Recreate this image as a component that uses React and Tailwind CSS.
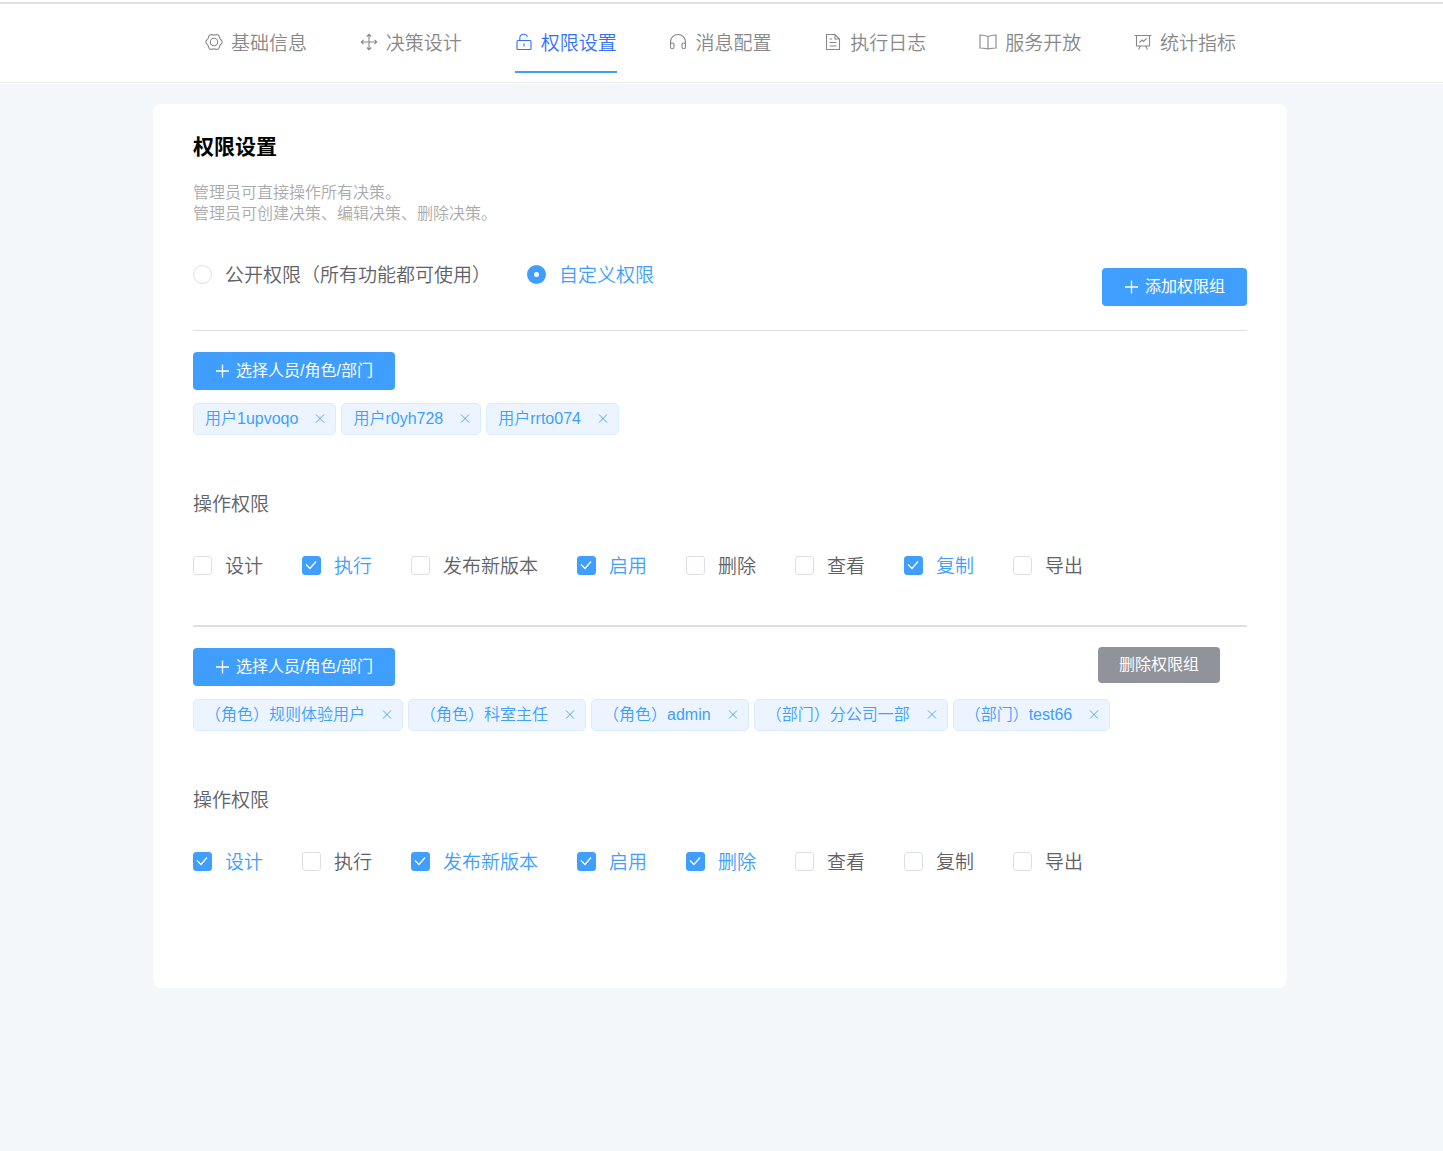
import { useState } from "react";
import clsx from "clsx";

// six-toothed outline with soft corners
const gearPath =
  Array.from({ length: 72 }, (_, i) => {
    const a = (i / 72) * Math.PI * 2;
    const r = 7.5 + 0.6 * Math.cos(6 * a);
    return `${i ? "L" : "M"}${(9 + r * Math.cos(a)).toFixed(2)} ${(9 + r * Math.sin(a)).toFixed(2)}`;
  }).join("") + "Z";

const icons = {
  setting: (
    <>
      <path d={gearPath} />
      <circle cx="9" cy="9" r="3.7" />
    </>
  ),
  rank: (
    <path d="M9 1.500v15M1.500 9h15M6.800 3.500 9 1.300l2.200 2.200M6.800 14.500 9 16.700l2.200-2.200M3.500 6.800 1.300 9l2.200 2.200M14.500 6.800 16.700 9l-2.200 2.200" />
  ),
  unlock: (
    <>
      <rect x="2" y="7.5" width="14" height="9" rx="1" />
      <path d="M4.800 7.500V5.200a4 4 0 0 1 7.700-1.500M9 10.500v3" />
    </>
  ),
  headset: (
    <path d="M1.500 11.500V9a7.500 7.500 0 0 1 15 0v2.500M1.500 12.500v-1.500a2 2 0 0 1 3.500 0v3a1.750 1.750 0 0 1-3.500 0zM16.500 12.500v-1.500a2 2 0 0 0-3.500 0v3a1.750 1.750 0 0 0 3.500 0z" />
  ),
  document: (
    <path d="M2.500 1.500h8.500l4.500 4.500v10.500h-13zM11 1.500v4.500h4.500M5.500 6h2.500M5.500 9.500h7M5.500 13h7" />
  ),
  reading: (
    <path d="M9 3.500v12.500M9 3.500Q5 2 1 2v13q4 0 8 1 4-1 8-1v-13q-4 0-8 1.500" />
  ),
  board: (
    <path d="M.5 2.500h17M2.500 2.500v10.500h13v-10.500M6.500 13l-2 3.500M11.500 13l2 3.500M5.500 9.500l2.500-2.500 1.500 1.500 3-3" />
  ),
};

const tabs = [
  { key: "base", label: "基础信息", icon: "setting" },
  { key: "design", label: "决策设计", icon: "rank" },
  { key: "permission", label: "权限设置", icon: "unlock" },
  { key: "message", label: "消息配置", icon: "headset" },
  { key: "log", label: "执行日志", icon: "document" },
  { key: "service", label: "服务开放", icon: "reading" },
  { key: "stats", label: "统计指标", icon: "board" },
];

const actions = ["设计", "执行", "发布新版本", "启用", "删除", "查看", "复制", "导出"];

const initialGroups = [
  {
    id: 1,
    members: ["用户1upvoqo", "用户r0yh728", "用户rrto074"],
    allowed: ["执行", "启用", "复制"],
  },
  {
    id: 2,
    members: [
      "（角色）规则体验用户",
      "（角色）科室主任",
      "（角色）admin",
      "（部门）分公司一部",
      "（部门）test66",
    ],
    allowed: ["设计", "发布新版本", "启用", "删除"],
  },
];

function TabIcon({ name }) {
  return (
    <svg
      className="size-[18px] shrink-0"
      viewBox="0 0 18 18"
      fill="none"
      stroke="currentColor"
      strokeWidth="1.1"
      aria-hidden="true"
    >
      {icons[name]}
    </svg>
  );
}

function AddButton({ children, className, onClick }) {
  return (
    <button
      type="button"
      onClick={onClick}
      className={clsx(
        "flex h-[38px] items-center gap-1.5 rounded bg-[#409eff] pr-[22px] pl-[21px] text-base font-normal text-white",
        className,
      )}
    >
      <svg className="size-4" viewBox="0 0 16 16" stroke="currentColor" strokeWidth="1.3" aria-hidden="true">
        <path d="M8.500 1.500v13M2 8h13" />
      </svg>
      {children}
    </button>
  );
}

function Tag({ label, onClose }) {
  return (
    <span className="flex h-8 items-center rounded-[5px] border border-[#d9ecff] bg-[#ecf5ff] pr-1.5 pl-[11px] text-base whitespace-nowrap text-[#409eff]">
      {label}
      <button
        type="button"
        aria-label={`移除${label}`}
        onClick={onClose}
        className="ml-[13px] flex size-[18px] items-center justify-center"
      >
        <svg className="size-2.5" viewBox="0 0 10 10" stroke="currentColor" strokeWidth="0.9" aria-hidden="true">
          <path d="M1 .5l8 8M9 .5l-8 8" />
        </svg>
      </button>
    </span>
  );
}

function ActionCheckbox({ label, checked, onChange }) {
  return (
    <label
      className={clsx(
        "flex h-[19px] cursor-pointer items-center gap-[13px]",
        checked ? "text-[#409eff]" : "text-[#606266]",
      )}
    >
      <span className="relative flex">
        <input
          type="checkbox"
          checked={checked}
          onChange={onChange}
          className="size-[19px] appearance-none rounded-[3px] border border-[#dcdfe6] bg-white checked:border-[#409eff] checked:bg-[#409eff]"
        />
        {checked && (
          <svg
            className="pointer-events-none absolute inset-0 size-[19px] text-white"
            viewBox="0 0 19 19"
            fill="none"
            stroke="currentColor"
            strokeWidth="1.2"
            aria-hidden="true"
          >
            <path d="M4 8.500l4 4 6-7" />
          </svg>
        )}
      </span>
      <span className="pt-0.5">{label}</span>
    </label>
  );
}

function ScopeRadio({ label, checked, onChange }) {
  return (
    <label
      className={clsx(
        "flex h-[19px] cursor-pointer items-center gap-[13px]",
        checked ? "text-[#409eff]" : "text-[#606266]",
      )}
    >
      <input
        type="radio"
        name="scope"
        checked={checked}
        onChange={onChange}
        className="size-[19px] appearance-none rounded-full border border-[#dcdfe6] bg-white checked:border-[7px] checked:border-[#409eff]"
      />
      <span className="pt-0.5">{label}</span>
    </label>
  );
}

function PermissionGroup({ group, first, onChange, onDelete }) {
  const toggle = (action) =>
    onChange({
      ...group,
      allowed: group.allowed.includes(action)
        ? group.allowed.filter((a) => a !== action)
        : [...group.allowed, action],
    });

  return (
    <section className={clsx("border-[#dcdfe6] pb-[50px]", first ? "border-t pt-[21px]" : "border-t-2 pt-5")}>
      <div className="flex items-start justify-between pr-[27px]">
        <AddButton className={first ? "" : "mt-px"}>选择人员/角色/部门</AddButton>
        {!first && (
          <button
            type="button"
            onClick={onDelete}
            className="h-9 rounded bg-[#909399] px-[21px] text-base font-normal text-white"
          >
            删除权限组
          </button>
        )}
      </div>
      <div className="mt-[13px] flex flex-wrap gap-[5px]">
        {group.members.map((m) => (
          <Tag
            key={m}
            label={m}
            onClose={() => onChange({ ...group, members: group.members.filter((v) => v !== m) })}
          />
        ))}
      </div>
      <fieldset className="mt-[60px]">
        <legend className="leading-5 text-[#606266]">操作权限</legend>
        <div className="mt-[41px] flex flex-wrap gap-x-[39px] gap-y-4">
          {actions.map((a) => (
            <ActionCheckbox key={a} label={a} checked={group.allowed.includes(a)} onChange={() => toggle(a)} />
          ))}
        </div>
      </fieldset>
    </section>
  );
}

export default function App() {
  const [tab, setTab] = useState("permission");
  const [scope, setScope] = useState("custom");
  const [groups, setGroups] = useState(initialGroups);

  const addGroup = () => setGroups([...groups, { id: Date.now(), members: [], allowed: [] }]);
  const updateGroup = (next) => setGroups(groups.map((g) => (g.id === next.id ? next : g)));
  const deleteGroup = (id) => setGroups(groups.filter((g) => g.id !== id));

  return (
    <div className="min-h-screen bg-[#f3f7fa] font-['Liberation_Sans','Noto_Sans_CJK_SC',sans-serif] text-[19px] leading-7 font-[350]">
      <header className="bg-white pt-0.5 pb-px">
        <nav className="flex justify-between border-t-2 border-b border-t-[#e0e0e0] border-b-[#ebebeb] py-[9px] pr-[207px] pl-[205px]">
          {tabs.map((t) => (
            <button
              key={t.key}
              type="button"
              onClick={() => setTab(t.key)}
              className={clsx(
                "flex h-[60px] items-center gap-2 border-b-2 whitespace-nowrap",
                tab === t.key ? "border-[#409eff] text-[#3370ff]" : "border-transparent text-[#888888]",
              )}
            >
              <TabIcon name={t.icon} />
              <span className="pt-1">{t.label}</span>
            </button>
          ))}
        </nav>
      </header>

      <main className="mt-5 mr-[156px] ml-[153px] rounded-lg bg-white px-10 pt-[29px] pb-[67px]">
        <h1 className="text-[21px] leading-7 font-bold text-black">权限设置</h1>
        <p className="mt-[21px] text-base leading-[21px] text-[#aaaaaa]">
          管理员可直接操作所有决策。
          <br />
          管理员可创建决策、编辑决策、删除决策。
        </p>
        <div className="mt-[41px] mb-6 flex items-start justify-between">
          <div className="flex gap-9">
            <ScopeRadio
              label="公开权限（所有功能都可使用）"
              checked={scope === "public"}
              onChange={() => setScope("public")}
            />
            <ScopeRadio label="自定义权限" checked={scope === "custom"} onChange={() => setScope("custom")} />
          </div>
          <AddButton className="mt-[3px]" onClick={addGroup}>
            添加权限组
          </AddButton>
        </div>
        {groups.map((g, i) => (
          <PermissionGroup
            key={g.id}
            group={g}
            first={i === 0}
            onChange={updateGroup}
            onDelete={() => deleteGroup(g.id)}
          />
        ))}
      </main>
    </div>
  );
}
